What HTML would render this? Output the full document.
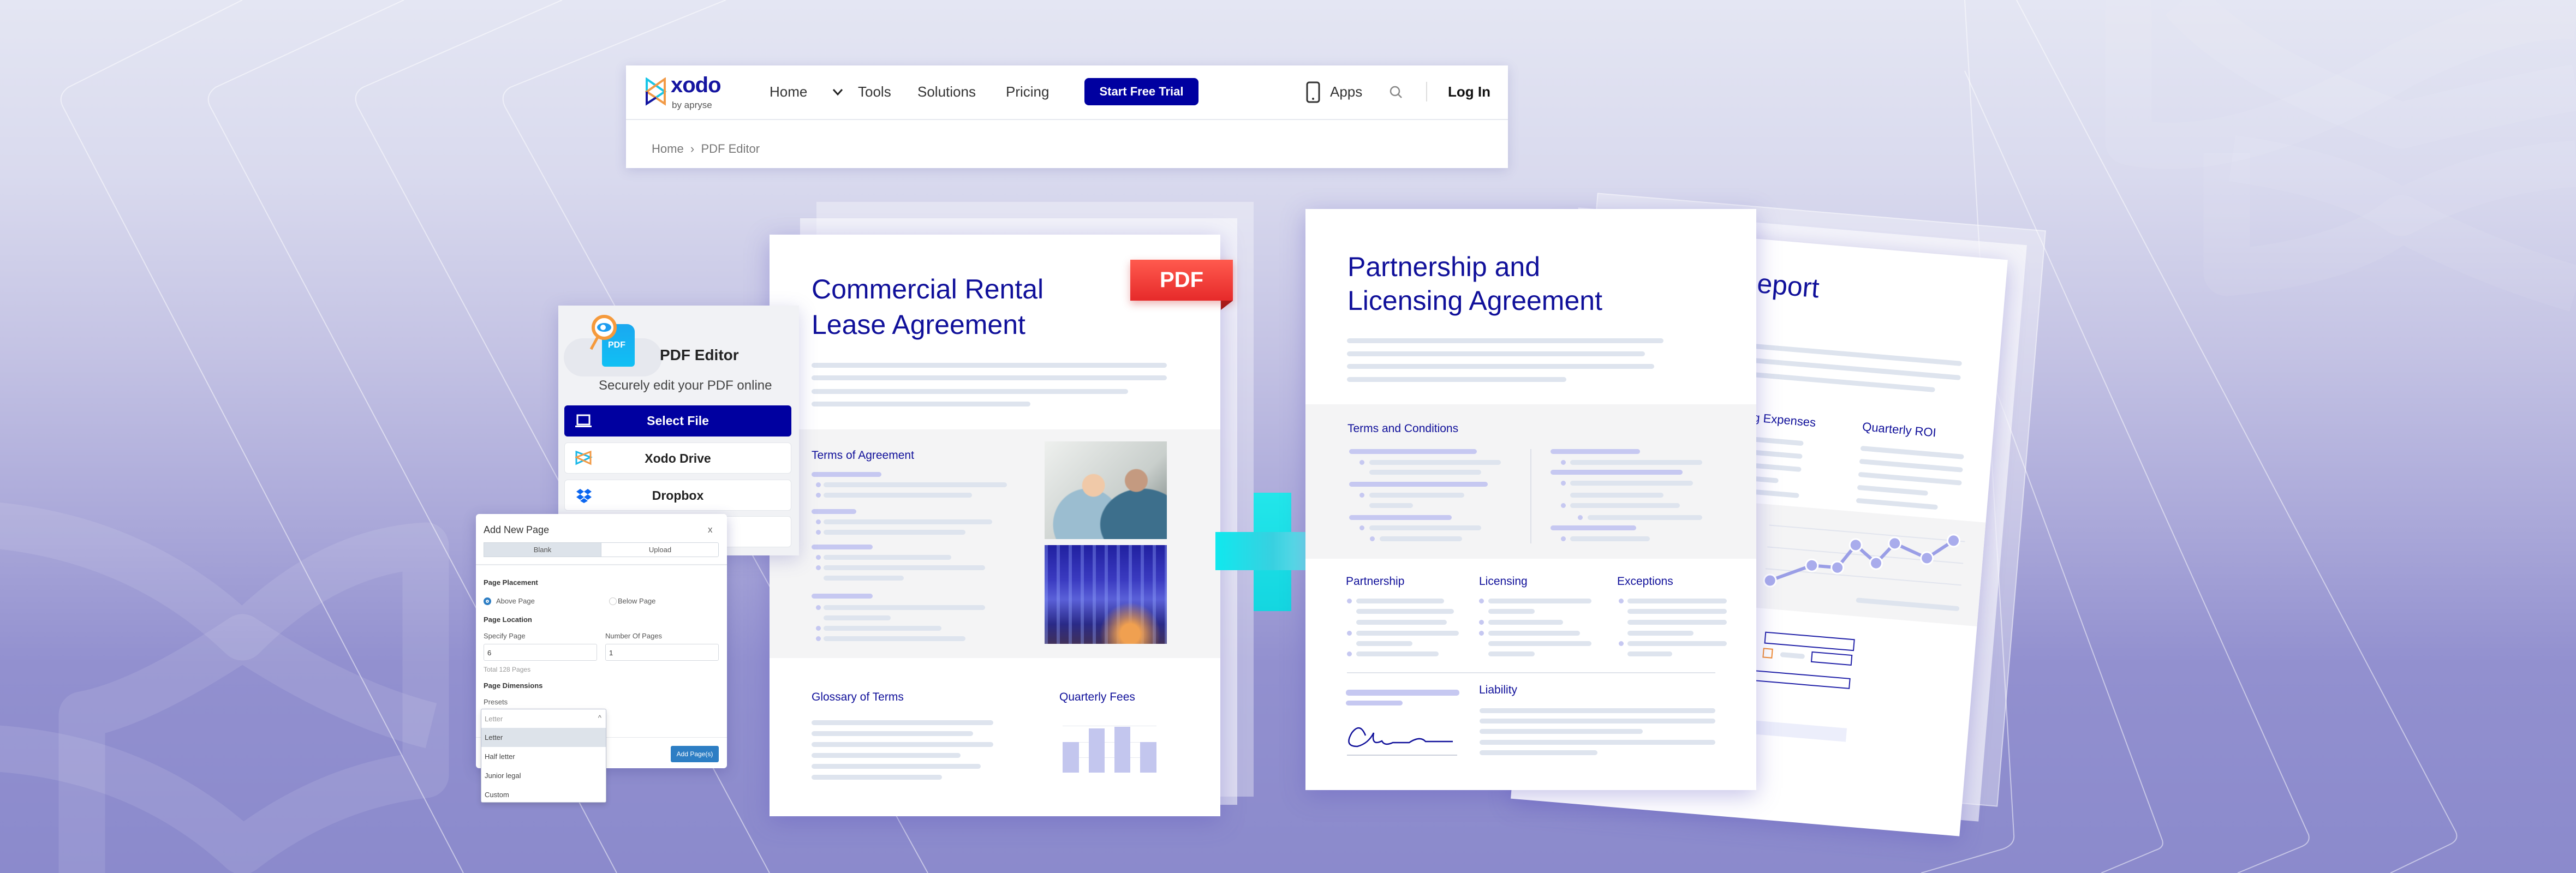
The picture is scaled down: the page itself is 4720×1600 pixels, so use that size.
<!DOCTYPE html>
<html><head><meta charset="utf-8"><style>
*{margin:0;padding:0;box-sizing:border-box}
body{width:4720px;height:1600px;overflow:hidden;position:relative;font-family:"Liberation Sans",sans-serif;background:linear-gradient(180deg,#e4e6f3 0%,#d9daee 20%,#c4c3e4 40%,#aaa8d9 60%,#9290cf 76%,#8b8acc 100%)}
.a{position:absolute}
.doc{position:absolute;background:#fff;overflow:hidden;box-shadow:0 10px 40px rgba(90,80,190,.35)}
.l{position:absolute;height:9px;border-radius:5px;background:#dee4ee}
.b{position:absolute;height:9px;border-radius:5px;background:#c6c8f1}
.d{position:absolute;width:9px;height:9px;border-radius:50%;background:#c6c8f1}
.navy{color:#10109a}
.t{position:absolute;white-space:nowrap}
</style></head><body>

<svg class="a" style="left:0;top:0" width="4720" height="1600">
<g fill="none" stroke="rgba(255,255,255,0.5)" stroke-width="2">
<path d="M444 0 L125 160 Q105 175 115 195 L849 1600"/>
<path d="M740 0 L395 160 Q375 175 385 195 L1130 1600"/>
<path d="M1030 0 L665 160 Q645 172 655 195 L1410 1600"/>
<path d="M1330 0 L935 160 Q915 172 925 195 L1700 1600"/>
<path d="M3600 0 L3690 1530 Q3692 1548 3670 1556 L3520 1600"/>
<path d="M3695 0 L4500 1525 Q4506 1540 4488 1548 L4380 1600"/>
<path d="M3600 130 L4230 1530 Q4234 1545 4216 1552 L4100 1600"/>
<path d="M3600 560 L3962 1540 Q3966 1553 3950 1558 L3850 1600"/>
</g>
<g fill="none" stroke="rgba(255,255,255,0.1)" stroke-width="85" stroke-linejoin="round">
<path d="M-40 960 Q250 980 444 1168 Q600 1010 780 1000 L780 1420 Q600 1440 444 1560 Q250 1380 -40 1370"/>
<path d="M150 1600 L150 1310 Q260 1290 444 1168 Q630 1290 790 1330"/>
</g>
<g fill="none" stroke="rgba(255,255,255,0.07)" stroke-width="85" stroke-linejoin="round">
<path d="M4000 0 Q4100 120 4400 230 Q4600 180 4720 160"/>
<path d="M3900 -40 L3900 260 Q4100 300 4400 120 Q4600 20 4720 30"/>
<path d="M4080 280 L4080 500 Q4300 480 4400 400 Q4550 480 4720 530"/>
<path d="M4090 290 Q4300 320 4400 390 Q4550 310 4720 300"/>
</g>
</svg>

<!-- nav -->
<div class="a" style="left:1147px;top:120px;width:1616px;height:188px;background:#fff;box-shadow:0 4px 20px rgba(80,80,160,.2)">
  <div class="a" style="left:0;top:98px;width:100%;height:2px;background:#e6e9ef"></div>
  <svg class="a" style="left:35px;top:22px" width="40" height="52" viewBox="0 0 40 52"><path d="M3 3 L3 48 L36 26 Z" fill="none" stroke="#18c6e8" stroke-width="4"/><path d="M36 3 L36 48 L3 26 Z" fill="none" stroke="#f29a46" stroke-width="4"/><path d="M3 26 L3 48 L20 37" fill="none" stroke="#1414a0" stroke-width="4"/></svg>
  <div class="t" style="left:82px;top:14px;font-size:40px;color:#1414a0;font-weight:bold;letter-spacing:-1px">xodo</div>
  <div class="t" style="left:84px;top:63px;font-size:17px;color:#555">by apryse</div>
  <div class="t" style="left:263px;top:33px;font-size:26px;color:#333">Home</div>
  <svg class="a" style="left:378px;top:42px" width="20" height="14"><path d="M2 2 L10 11 L18 2" fill="none" stroke="#222" stroke-width="3"/></svg>
  <div class="t" style="left:425px;top:33px;font-size:26px;color:#333">Tools</div>
  <div class="t" style="left:534px;top:33px;font-size:26px;color:#333">Solutions</div>
  <div class="t" style="left:696px;top:33px;font-size:26px;color:#333">Pricing</div>
  <div class="a" style="left:840px;top:23px;width:209px;height:50px;background:#0000a0;border-radius:8px;color:#fff;font-weight:bold;font-size:22px;line-height:50px;text-align:center">Start Free Trial</div>
  <svg class="a" style="left:1246px;top:29px" width="26" height="40"><rect x="2" y="2" width="22" height="36" rx="4" fill="none" stroke="#333" stroke-width="3"/><circle cx="13" cy="32" r="2" fill="#333"/></svg>
  <div class="t" style="left:1290px;top:33px;font-size:26px;color:#333">Apps</div>
  <svg class="a" style="left:1398px;top:36px" width="26" height="26"><circle cx="11" cy="11" r="8" fill="none" stroke="#888" stroke-width="2.5"/><path d="M17 17 L23 23" stroke="#888" stroke-width="2.5"/></svg>
  <div class="a" style="left:1466px;top:30px;width:2px;height:36px;background:#ddd"></div>
  <div class="t" style="left:1506px;top:33px;font-size:26px;color:#111;font-weight:bold">Log In</div>
  <div class="t" style="left:47px;top:140px;font-size:22px;color:#777">Home &nbsp;›&nbsp; PDF Editor</div>
</div>

<!-- doc1 stack -->
<div class="a" style="left:1496px;top:370px;width:801px;height:1090px;background:rgba(255,255,255,.35)"></div>
<div class="a" style="left:1466px;top:400px;width:801px;height:1075px;background:rgba(255,255,255,.55)"></div>
<div class="doc" style="left:1410px;top:430px;width:826px;height:1066px">
  <div class="t navy" style="left:77px;top:68px;font-size:50px;line-height:65px">Commercial Rental<br>Lease Agreement</div>
  <div class="l" style="left:77px;top:235px;width:651px"></div>
  <div class="l" style="left:77px;top:258px;width:651px"></div>
  <div class="l" style="left:77px;top:283px;width:580px"></div>
  <div class="l" style="left:77px;top:306px;width:401px"></div>
  <div class="a" style="left:0;top:357px;width:826px;height:419px;background:#f4f4f5"></div>
  <div class="t navy" style="left:77px;top:393px;font-size:21px">Terms of Agreement</div>
  <div class="b" style="left:77px;top:435px;width:128px"></div>
  <div class="d" style="left:85px;top:454px"></div><div class="l" style="left:99px;top:454px;width:336px"></div>
  <div class="d" style="left:85px;top:473px"></div><div class="l" style="left:99px;top:473px;width:272px"></div>
  <div class="b" style="left:77px;top:503px;width:82px"></div>
  <div class="d" style="left:85px;top:522px"></div><div class="l" style="left:99px;top:522px;width:309px"></div>
  <div class="d" style="left:85px;top:541px"></div><div class="l" style="left:99px;top:541px;width:260px"></div>
  <div class="b" style="left:77px;top:568px;width:112px"></div>
  <div class="d" style="left:85px;top:587px"></div><div class="l" style="left:99px;top:587px;width:234px"></div>
  <div class="d" style="left:85px;top:606px"></div><div class="l" style="left:99px;top:606px;width:296px"></div>
  <div class="l" style="left:99px;top:625px;width:147px"></div>
  <div class="b" style="left:77px;top:658px;width:112px"></div>
  <div class="d" style="left:85px;top:679px"></div><div class="l" style="left:99px;top:679px;width:296px"></div>
  <div class="l" style="left:99px;top:698px;width:123px"></div>
  <div class="d" style="left:85px;top:717px"></div><div class="l" style="left:99px;top:717px;width:216px"></div>
  <div class="d" style="left:85px;top:736px"></div><div class="l" style="left:99px;top:736px;width:260px"></div>
  <div class="a" style="left:504px;top:379px;width:224px;height:179px;background:radial-gradient(circle at 40% 45%,#f0c9a8 0 12%,transparent 13%),radial-gradient(circle at 75% 40%,#c49a80 0 10%,transparent 11%),radial-gradient(ellipse at 80% 85%,#3d6f8c 0 30%,transparent 31%),radial-gradient(ellipse at 35% 85%,#9bbdd0 0 30%,transparent 31%),linear-gradient(135deg,#eef0ee,#c9cfcc 60%,#6f7a78)"></div>
  <div class="a" style="left:504px;top:569px;width:224px;height:181px;background:radial-gradient(ellipse at 70% 90%,#f0a050 0 8%,transparent 25%),repeating-linear-gradient(90deg,rgba(150,170,255,.35) 0 6px,transparent 6px 22px),linear-gradient(180deg,#2020a0 0%,#3a3ac0 35%,#5a60d8 55%,#2a2a88 80%,#40305a 100%)"></div>
  <div class="t navy" style="left:77px;top:836px;font-size:21px">Glossary of Terms</div>
  <div class="t navy" style="left:531px;top:836px;font-size:21px">Quarterly Fees</div>
  <div class="l" style="left:77px;top:890px;width:333px"></div>
  <div class="l" style="left:77px;top:910px;width:296px"></div>
  <div class="l" style="left:77px;top:930px;width:333px"></div>
  <div class="l" style="left:77px;top:950px;width:273px"></div>
  <div class="l" style="left:77px;top:970px;width:310px"></div>
  <div class="l" style="left:77px;top:990px;width:239px"></div>
  <div class="a" style="left:537px;top:900px;width:172px;height:1px;background:#e6e8f0"></div>
  <div class="a" style="left:537px;top:930px;width:172px;height:1px;background:#e6e8f0"></div>
  <div class="a" style="left:537px;top:958px;width:172px;height:1px;background:#e6e8f0"></div>
  <div class="a" style="left:537px;top:930px;width:30px;height:56px;background:#c3c6ee"></div>
  <div class="a" style="left:585px;top:905px;width:29px;height:81px;background:#c3c6ee"></div>
  <div class="a" style="left:632px;top:902px;width:29px;height:84px;background:#c3c6ee"></div>
  <div class="a" style="left:679px;top:930px;width:30px;height:56px;background:#c3c6ee"></div>
</div>
<!-- PDF badge -->
<div class="a" style="left:2237px;top:551px;width:0;height:0;border-left:22px solid #a01818;border-bottom:17px solid transparent"></div>
<div class="a" style="left:2071px;top:476px;width:188px;height:75px;background:linear-gradient(180deg,#ff5a4e,#e62a2a);color:#fff;font-size:40px;font-weight:bold;line-height:75px;text-align:center;box-shadow:0 6px 14px rgba(200,40,40,.35)">PDF</div>

<!-- cyan plus -->
<div class="a" style="left:2297px;top:903px;width:69px;height:217px;background:linear-gradient(180deg,#22e6ea,#14d6e0)"></div>
<div class="a" style="left:2227px;top:975px;width:211px;height:70px;background:linear-gradient(90deg,#10e8ee,#38d0e0 50%,#8af0f4)"></div>

<!-- doc3 stack -->
<div class="a" style="left:2881px;top:386px;width:825px;height:1060px;transform:rotate(4.8deg);background:rgba(255,255,255,.35);border:2px solid rgba(255,255,255,.4)"></div>
<div class="a" style="left:2846px;top:413px;width:825px;height:1060px;transform:rotate(4.8deg);background:rgba(255,255,255,.6)"></div>
<div class="doc" style="left:2811px;top:440px;width:825px;height:1060px;transform:rotate(4.8deg)">
  <div class="t navy" style="right:340px;top:52px;font-size:50px">Annual Report</div>
  <div class="l" style="left:90px;top:192px;width:667px"></div>
  <div class="l" style="left:90px;top:218px;width:667px"></div>
  <div class="l" style="left:90px;top:244px;width:622px"></div>
  <div class="l" style="left:90px;top:270px;width:180px"></div>
  <div class="t navy" style="left:300px;top:314px;font-size:22px">Operating Expenses</div>
  <div class="t navy" style="left:585px;top:314px;font-size:22px">Quarterly ROI</div>
  <div class="l" style="left:280px;top:362px;width:200px"></div><div class="l" style="left:585px;top:362px;width:190px"></div>
  <div class="l" style="left:280px;top:386px;width:200px"></div><div class="l" style="left:585px;top:386px;width:190px"></div>
  <div class="l" style="left:280px;top:410px;width:200px"></div><div class="l" style="left:585px;top:410px;width:190px"></div>
  <div class="l" style="left:280px;top:434px;width:160px"></div><div class="l" style="left:585px;top:434px;width:130px"></div>
  <div class="l" style="left:280px;top:458px;width:200px"></div><div class="l" style="left:585px;top:458px;width:150px"></div>
  <div class="a" style="left:0;top:483px;width:825px;height:191px;background:#f4f4f5"></div>
  <div class="a" style="left:430px;top:520px;width:360px;height:2px;background:#e2e5ee"></div>
  <div class="a" style="left:430px;top:560px;width:360px;height:2px;background:#e2e5ee"></div>
  <div class="a" style="left:430px;top:600px;width:360px;height:2px;background:#e2e5ee"></div>
  <div class="l" style="left:600px;top:640px;width:190px"></div>
  <svg class="a" style="left:0;top:0" width="825" height="700"><polyline points="440,622 514,588 561,588 591,544 631,574 662,535 723,557 769,521" fill="none" stroke="#9a9ee6" stroke-width="6"/><g fill="#a9acec" stroke="#fff" stroke-width="3"><circle cx="440" cy="622" r="11"/><circle cx="514" cy="588" r="11"/><circle cx="561" cy="588" r="11"/><circle cx="591" cy="544" r="11"/><circle cx="631" cy="574" r="11"/><circle cx="662" cy="535" r="11"/><circle cx="723" cy="557" r="11"/><circle cx="769" cy="521" r="11"/></g></svg>
  <div class="a" style="left:439px;top:716px;width:165px;height:22px;border:2px solid #2020a8"></div>
  <div class="a" style="left:438px;top:746px;width:18px;height:18px;border:2px solid #f08a30"></div>
  <div class="l" style="left:470px;top:751px;width:45px"></div>
  <div class="a" style="left:527px;top:745px;width:75px;height:20px;border:2px solid #2020a8"></div>
  <div class="a" style="left:250px;top:788px;width:352px;height:20px;border:2px solid #2020a8"></div>
  <div class="a" style="left:250px;top:880px;width:353px;height:25px;background:#eceefb"></div>
</div>

<!-- doc2 -->
<div class="doc" style="left:2392px;top:383px;width:826px;height:1065px">
  <div class="t navy" style="left:77px;top:75px;font-size:50px;line-height:62px">Partnership and<br>Licensing Agreement</div>
  <div class="l" style="left:76px;top:237px;width:580px"></div>
  <div class="l" style="left:76px;top:261px;width:546px"></div>
  <div class="l" style="left:76px;top:284px;width:563px"></div>
  <div class="l" style="left:76px;top:308px;width:402px"></div>
  <div class="a" style="left:0;top:358px;width:826px;height:283px;background:#f4f4f5"></div>
  <div class="t navy" style="left:77px;top:391px;font-size:21px">Terms and Conditions</div>
  <div class="a" style="left:412px;top:440px;width:2px;height:173px;background:#dde0e8"></div>
  <div class="b" style="left:80px;top:440px;width:234px"></div>
  <div class="d" style="left:99px;top:460px"></div><div class="l" style="left:117px;top:460px;width:241px"></div>
  <div class="l" style="left:117px;top:478px;width:205px"></div>
  <div class="b" style="left:80px;top:500px;width:254px"></div>
  <div class="d" style="left:99px;top:520px"></div><div class="l" style="left:117px;top:520px;width:174px"></div>
  <div class="l" style="left:117px;top:539px;width:80px"></div>
  <div class="b" style="left:80px;top:561px;width:188px"></div>
  <div class="d" style="left:99px;top:580px"></div><div class="l" style="left:117px;top:580px;width:205px"></div>
  <div class="d" style="left:118px;top:600px"></div><div class="l" style="left:136px;top:600px;width:151px"></div>
  <div class="b" style="left:449px;top:440px;width:164px"></div>
  <div class="d" style="left:468px;top:460px"></div><div class="l" style="left:485px;top:460px;width:242px"></div>
  <div class="b" style="left:449px;top:478px;width:242px"></div>
  <div class="d" style="left:468px;top:498px"></div><div class="l" style="left:485px;top:498px;width:225px"></div>
  <div class="l" style="left:485px;top:520px;width:171px"></div>
  <div class="d" style="left:468px;top:539px"></div><div class="l" style="left:485px;top:539px;width:201px"></div>
  <div class="d" style="left:499px;top:561px"></div><div class="l" style="left:517px;top:561px;width:210px"></div>
  <div class="b" style="left:449px;top:580px;width:157px"></div>
  <div class="d" style="left:468px;top:600px"></div><div class="l" style="left:485px;top:600px;width:146px"></div>
  <div class="t navy" style="left:74px;top:671px;font-size:21px">Partnership</div>
  <div class="t navy" style="left:318px;top:671px;font-size:21px">Licensing</div>
  <div class="t navy" style="left:571px;top:671px;font-size:21px">Exceptions</div>
  <div class="d" style="left:76px;top:714px"></div><div class="l" style="left:93px;top:714px;width:161px"></div>
  <div class="l" style="left:93px;top:733px;width:179px"></div>
  <div class="l" style="left:93px;top:753px;width:166px"></div>
  <div class="d" style="left:76px;top:773px"></div><div class="l" style="left:93px;top:773px;width:188px"></div>
  <div class="l" style="left:93px;top:792px;width:103px"></div>
  <div class="d" style="left:76px;top:811px"></div><div class="l" style="left:93px;top:811px;width:151px"></div>
  <div class="d" style="left:318px;top:714px"></div><div class="l" style="left:335px;top:714px;width:189px"></div>
  <div class="l" style="left:335px;top:733px;width:85px"></div>
  <div class="d" style="left:318px;top:753px"></div><div class="l" style="left:335px;top:753px;width:137px"></div>
  <div class="d" style="left:318px;top:773px"></div><div class="l" style="left:335px;top:773px;width:168px"></div>
  <div class="l" style="left:335px;top:792px;width:189px"></div>
  <div class="l" style="left:335px;top:811px;width:85px"></div>
  <div class="d" style="left:574px;top:714px"></div><div class="l" style="left:590px;top:714px;width:182px"></div>
  <div class="l" style="left:590px;top:733px;width:182px"></div>
  <div class="l" style="left:590px;top:753px;width:182px"></div>
  <div class="l" style="left:590px;top:773px;width:121px"></div>
  <div class="d" style="left:574px;top:792px"></div><div class="l" style="left:590px;top:792px;width:182px"></div>
  <div class="l" style="left:590px;top:811px;width:82px"></div>
  <div class="a" style="left:76px;top:849px;width:675px;height:2px;background:#dfe2ea"></div>
  <div class="b" style="left:74px;top:881px;width:208px;height:11px"></div>
  <div class="b" style="left:74px;top:901px;width:104px"></div>
  <div class="t navy" style="left:318px;top:870px;font-size:21px">Liability</div>
  <div class="l" style="left:319px;top:915px;width:432px"></div>
  <div class="l" style="left:319px;top:934px;width:432px"></div>
  <div class="l" style="left:319px;top:953px;width:299px"></div>
  <div class="l" style="left:319px;top:973px;width:432px"></div>
  <div class="l" style="left:319px;top:992px;width:216px"></div>
  <svg class="a" style="left:70px;top:940px" width="220" height="70"><path d="M40 25 Q30 0 15 20 Q0 45 25 45 Q45 40 55 20 Q50 45 70 35 Q75 45 90 38 L120 38 Q140 25 150 36 L200 36" fill="none" stroke="#10109a" stroke-width="2.5"/><rect x="6" y="60" width="202" height="2" fill="#ccd0dc"/></svg>
</div>

<!-- PDF editor panel -->
<div class="a" style="left:1023px;top:560px;width:441px;height:458px;background:#f1f2f5;box-shadow:0 8px 30px rgba(80,80,170,.25)">
  <div class="a" style="left:10px;top:60px;width:180px;height:70px;border-radius:40px;background:#e6e8ee"></div>
  <div class="a" style="left:80px;top:34px;width:60px;height:78px;background:linear-gradient(180deg,#1aa8f0,#10c0f4);border-radius:4px 14px 6px 6px"></div>
  <div class="t" style="left:91px;top:64px;font-size:16px;color:#fff;font-weight:bold">PDF</div>
  <svg class="a" style="left:54px;top:12px" width="60" height="80"><circle cx="30" cy="28" r="20" fill="#fff" stroke="#f59a3c" stroke-width="6"/><ellipse cx="30" cy="28" rx="13" ry="8" fill="#1d9df0"/><circle cx="28" cy="28" r="5" fill="#fff"/><path d="M18 46 L6 68" stroke="#f59a3c" stroke-width="5"/></svg>
  <div class="t" style="left:186px;top:75px;font-size:28px;color:#222;font-weight:bold">PDF Editor</div>
  <div class="t" style="left:74px;top:133px;font-size:24px;color:#444">Securely edit your PDF online</div>
  <div class="a" style="left:11px;top:183px;width:416px;height:57px;background:#0000a0;border-radius:6px"><svg class="a" style="left:20px;top:16px" width="30" height="26"><rect x="4" y="2" width="22" height="17" fill="none" stroke="#fff" stroke-width="3"/><rect x="0" y="21" width="30" height="3" fill="#fff"/></svg><div class="t" style="left:0;width:100%;text-align:center;top:15px;font-size:23px;color:#fff;font-weight:bold">Select File</div></div>
  <div class="a" style="left:11px;top:251px;width:416px;height:57px;background:#fff;border:1px solid #e3e6ea;border-radius:6px"><svg class="a" style="left:19px;top:14px" width="32" height="28"><path d="M2 2 L2 24 L28 12 Z" fill="none" stroke="#1ab8e8" stroke-width="3"/><path d="M28 2 L28 24 L2 12 Z" fill="none" stroke="#f29a46" stroke-width="3"/></svg><div class="t" style="left:0;width:100%;text-align:center;top:15px;font-size:23px;color:#222;font-weight:bold">Xodo Drive</div></div>
  <div class="a" style="left:11px;top:319px;width:416px;height:57px;background:#fff;border:1px solid #e3e6ea;border-radius:6px"><svg class="a" style="left:20px;top:14px" width="30" height="28" fill="#0b66f0"><path d="M8 2 L15 7 L8 12 L1 7Z M22 2 L29 7 L22 12 L15 7Z M8 12 L15 17 L8 22 L1 17Z M22 12 L29 17 L22 22 L15 17Z M15 19 L22 24 L15 28 L8 24Z"/></svg><div class="t" style="left:0;width:100%;text-align:center;top:15px;font-size:23px;color:#222;font-weight:bold">Dropbox</div></div>
  <div class="a" style="left:11px;top:386px;width:416px;height:57px;background:#fff;border:1px solid #e3e6ea;border-radius:6px"></div>
</div>

<!-- dialog -->
<div class="a" style="left:872px;top:942px;width:460px;height:466px;background:#fff;border-radius:6px;box-shadow:0 6px 24px rgba(60,60,140,.3);color:#333">
  <div class="t" style="left:14px;top:19px;font-size:18px">Add New Page</div>
  <div class="t" style="left:425px;top:19px;font-size:17px;color:#666">x</div>
  <div class="a" style="left:14px;top:52px;width:431px;height:27px;border:1px solid #cfd6de;border-radius:3px"></div>
  <div class="a" style="left:14px;top:52px;width:216px;height:27px;background:#dde3ea;border:1px solid #cfd6de;font-size:13px;color:#555;text-align:center;line-height:25px">Blank</div>
  <div class="t" style="left:230px;top:58px;width:215px;text-align:center;font-size:13px;color:#555">Upload</div>
  <div class="a" style="left:0;top:92px;width:460px;height:2px;background:#e5e8ec"></div>
  <div class="t" style="left:14px;top:118px;font-size:13px;font-weight:bold">Page Placement</div>
  <div class="a" style="left:14px;top:153px;width:14px;height:14px;border-radius:50%;background:#2d7ec4;border:4px solid #2d7ec4;box-shadow:inset 0 0 0 2px #fff"></div>
  <div class="t" style="left:37px;top:152px;font-size:13px;color:#555">Above Page</div>
  <div class="a" style="left:244px;top:153px;width:14px;height:14px;border-radius:50%;border:1px solid #ccc"></div>
  <div class="t" style="left:260px;top:152px;font-size:13px;color:#555">Below Page</div>
  <div class="t" style="left:14px;top:186px;font-size:13px;font-weight:bold">Page Location</div>
  <div class="t" style="left:14px;top:216px;font-size:13px;color:#555">Specify Page</div>
  <div class="t" style="left:237px;top:216px;font-size:13px;color:#555">Number Of Pages</div>
  <div class="a" style="left:14px;top:238px;width:208px;height:31px;border:1px solid #d5d9de;border-radius:3px;font-size:13px;padding:8px 6px">6</div>
  <div class="a" style="left:237px;top:238px;width:208px;height:31px;border:1px solid #d5d9de;border-radius:3px;font-size:13px;padding:8px 6px">1</div>
  <div class="t" style="left:14px;top:278px;font-size:12px;color:#999">Total 128 Pages</div>
  <div class="t" style="left:14px;top:307px;font-size:13px;font-weight:bold">Page Dimensions</div>
  <div class="t" style="left:14px;top:337px;font-size:13px;color:#555">Presets</div>
  <div class="a" style="left:0;top:409px;width:460px;height:1px;background:#e5e8ec"></div>
  <div class="a" style="left:357px;top:425px;width:88px;height:30px;background:#2d7ec4;border-radius:3px;color:#fff;font-size:12px;text-align:center;line-height:30px">Add Page(s)</div>
</div>
<div class="a" style="left:881px;top:1299px;width:230px;height:172px;background:#fff;border:1px solid #b8bed0;border-radius:3px;box-shadow:0 4px 10px rgba(0,0,0,.15);font-size:13px;color:#444">
  <div class="a" style="left:0;top:0;width:100%;height:34px;padding:10px 6px;color:#999">Letter<span style="position:absolute;right:8px;top:8px;color:#666">^</span></div>
  <div class="a" style="left:0;top:34px;width:100%;height:35px;padding:10px 6px;background:#dde3ea">Letter</div>
  <div class="a" style="left:0;top:69px;width:100%;height:35px;padding:10px 6px">Half letter</div>
  <div class="a" style="left:0;top:104px;width:100%;height:35px;padding:10px 6px">Junior legal</div>
  <div class="a" style="left:0;top:139px;width:100%;height:33px;padding:10px 6px">Custom</div>
</div>
</body></html>
